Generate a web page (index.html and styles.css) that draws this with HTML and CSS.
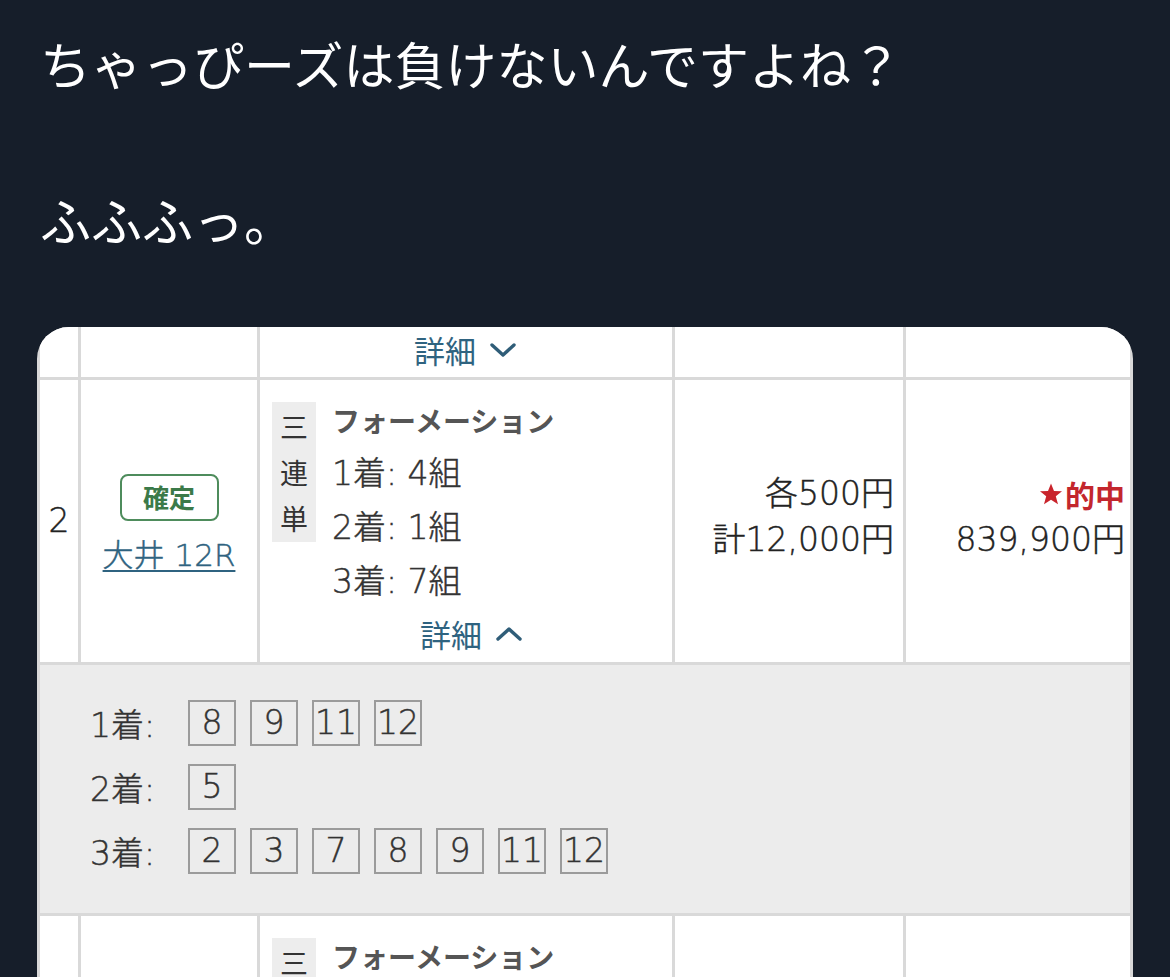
FILE: index.html
```html
<!DOCTYPE html>
<html lang="ja">
<head>
<meta charset="utf-8">
<title>ちゃっぴーズ</title>
<link rel="stylesheet" href="styles.css">
</head>
<body>
<div class="tweet">
  <p class="line">ちゃっぴーズは負けないんですよね？</p>
  <p class="line gap">ふふふっ。</p>
</div>

<div class="card">
  <div class="grid">
    <!-- row 0 (partial) -->
    <div class="cell"></div>
    <div class="cell"></div>
    <div class="cell c3 top">
      <span class="more">詳細<svg class="chev" viewBox="0 0 26 14"><polyline points="2,2 13,12 24,2"/></svg></span>
    </div>
    <div class="cell"></div>
    <div class="cell"></div>

    <!-- row 1 -->
    <div class="cell c1">2</div>
    <div class="cell c2">
      <span class="badge">確定</span>
      <a class="race" href="#">大井 12R</a>
    </div>
    <div class="cell c3">
      <div class="bet">
        <div class="type">三<br>連<br>単</div>
        <div class="lines">
          <div class="title">フォーメーション</div>
          <div>1着: 4組</div>
          <div>2着: 1組</div>
          <div>3着: 7組</div>
        </div>
      </div>
      <span class="more">詳細<svg class="chev" viewBox="0 0 26 14"><polyline points="2,12 13,2 24,12"/></svg></span>
    </div>
    <div class="cell c4">
      <div>各500円</div>
      <div>計12,000円</div>
    </div>
    <div class="cell c5">
      <div class="hit"><svg class="star" viewBox="0 0 24 24"><polygon points="12,1.5 15,9 23,9.3 16.8,14.3 19,22.3 12,17.8 5,22.3 7.2,14.3 1,9.3 9,9"/></svg>的中</div>
      <div>839,900円</div>
    </div>

    <!-- detail row -->
    <div class="cell detail">
      <div class="pick"><span class="lab">1着:</span><span class="num">8</span><span class="num">9</span><span class="num">11</span><span class="num">12</span></div>
      <div class="pick"><span class="lab">2着:</span><span class="num">5</span></div>
      <div class="pick"><span class="lab">3着:</span><span class="num">2</span><span class="num">3</span><span class="num">7</span><span class="num">8</span><span class="num">9</span><span class="num">11</span><span class="num">12</span></div>
    </div>

    <!-- row 3 (cut by the frame) -->
    <div class="cell"></div>
    <div class="cell"></div>
    <div class="cell c3">
      <div class="bet">
        <div class="type">三<br>連<br>単</div>
        <div class="lines">
          <div class="title">フォーメーション</div>
        </div>
      </div>
    </div>
    <div class="cell"></div>
    <div class="cell"></div>
  </div>
</div>
</body>
</html>
```

FILE: styles.css
```css
html, body {
  margin: 0;
  padding: 0;
}
html {
  height: 977px;
  overflow: hidden;
  background: #161e2a;
}
body {
  background: #161e2a;
  padding: 0 37px;
  font-family: "Noto Sans CJK JP", "Noto Sans", sans-serif;
}

.tweet {
  padding-top: 24px;
  padding-left: 3px;
}
.line {
  margin: 0;
  color: #ffffff;
  font-size: 51px;
  line-height: 78px;
  font-weight: 400;
}
.line.gap {
  margin-top: 78px;
}

.card {
  margin-top: 69px;
  background: #d9d9d9;
  border-radius: 32px 32px 0 0;
  overflow: hidden;
  padding: 0 3px;
}
.grid {
  display: grid;
  grid-template-columns: 38px 176px 412px 228px 224px;
  grid-template-rows: 50px auto auto 120px;
  gap: 3px;
  font-family: "DejaVu Sans", "Noto Sans CJK JP", sans-serif;
  font-weight: 300;
}
.cell {
  background: #ffffff;
  color: #222222;
  font-size: 33px;
  -webkit-text-stroke: 0.45px currentColor;
}

.c1 {
  display: flex;
  align-items: center;
  justify-content: center;
  padding-bottom: 2px;
}
.c2 {
  display: flex;
  flex-direction: column;
  align-items: center;
  justify-content: center;
  gap: 14px;
  padding-top: 7px;
}
.badge {
  box-sizing: border-box;
  width: 99px;
  height: 47px;
  border: 2px solid #4e8c5c;
  border-radius: 8px;
  color: #3b7a49;
  font-family: "Noto Sans CJK JP", sans-serif;
  font-weight: 700;
  font-size: 26px;
  line-height: 41px;
  text-align: center;
  -webkit-text-stroke: 0;
}
.race {
  color: #2f6380;
  font-size: 31px;
  line-height: 40px;
  text-decoration: underline;
  text-decoration-thickness: 2px;
  text-underline-offset: 4px;
}

.c3 {
  display: flex;
  flex-direction: column;
  align-items: flex-start;
  padding: 13px 0 3px 12px;
}
.c3.top {
  justify-content: center;
  align-items: center;
  padding: 0 0 4px;
}
.c3.top .more {
  line-height: 44px;
}
.c3 .more {
  align-self: center;
  margin-left: -2px;
}
.bet {
  display: flex;
  gap: 16px;
}
.type {
  box-sizing: border-box;
  margin-top: 9px;
  width: 44px;
  height: 140px;
  padding-top: 1px;
  background: #ededed;
  color: #333333;
  font-family: "Noto Sans CJK JP", sans-serif;
  font-weight: 400;
  font-size: 28px;
  line-height: 46px;
  text-align: center;
  -webkit-text-stroke: 0;
}
.lines {
  color: #333333;
  font-size: 33px;
  line-height: 54px;
}
.lines .title {
  color: #555555;
  font-family: "Noto Sans CJK JP", sans-serif;
  font-weight: 700;
  font-size: 28px;
  -webkit-text-stroke: 0;
}
.more {
  display: flex;
  align-items: center;
  gap: 14px;
  color: #2f6380;
  font-family: "Noto Sans CJK JP", sans-serif;
  font-weight: 400;
  font-size: 31px;
  line-height: 50px;
  -webkit-text-stroke: 0;
}
.chev {
  width: 26px;
  height: 14px;
  fill: none;
  stroke: #2f5d78;
  stroke-width: 3.4;
  stroke-linecap: round;
  stroke-linejoin: round;
}

.c4, .c5 {
  display: flex;
  flex-direction: column;
  align-items: flex-end;
  justify-content: center;
  line-height: 46px;
  padding-bottom: 8px;
}
.c4 {
  padding-right: 9px;
}
.c5 {
  padding-right: 5px;
}
.hit {
  display: flex;
  align-items: center;
  gap: 2px;
  color: #c3262d;
  font-family: "Noto Sans CJK JP", sans-serif;
  font-weight: 700;
  font-size: 30px;
  -webkit-text-stroke: 0;
}
.star {
  width: 24px;
  height: 24px;
  fill: #c9242c;
}

.detail {
  grid-column: 1 / -1;
  background: #ececec;
  padding: 26px 0 30px 50px;
}
.pick {
  display: flex;
  align-items: center;
  height: 64px;
}
.lab {
  width: 98px;
  color: #333333;
}
.num {
  box-sizing: border-box;
  width: 48px;
  height: 46px;
  margin-right: 14px;
  border: 2px solid #9b9b9b;
  color: #333333;
  line-height: 42px;
  text-align: center;
}
```
